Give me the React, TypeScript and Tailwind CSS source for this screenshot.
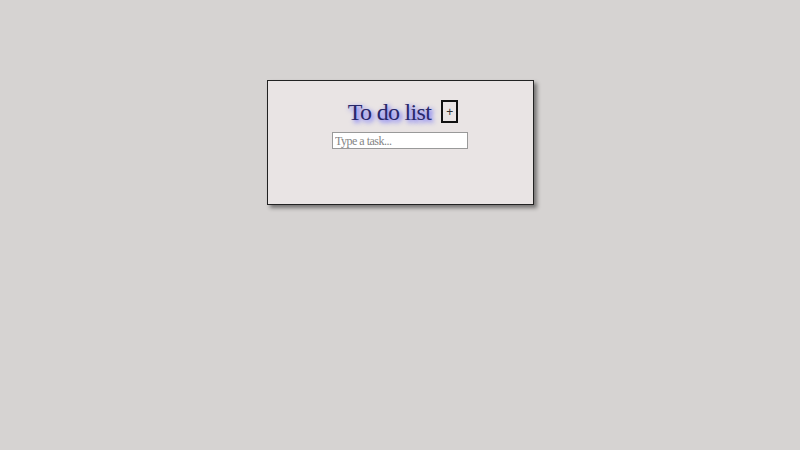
import React from "react";

export default function App() {
  return (
    <div className="min-h-screen w-full bg-[#d6d3d2] pt-[80px] font-['Liberation_Serif',serif]">
      <div className="mx-auto w-[267px] h-[125px] bg-[#e9e4e4] border border-[#222] shadow-[3px_3px_4px_rgba(0,0,0,0.45)] flex flex-col items-center pt-[19px]">
        <div className="flex items-center gap-[10px] h-[23px] pl-[6px]">
          <h1 className="text-[24px] tracking-[-0.7px] leading-none text-[#28286a] [text-shadow:2px_2px_5px_#4545ff]">
            To do list
          </h1>
          <button className="w-[17px] h-[23px] border-2 border-[#111] text-[12px] leading-none text-[#333] flex items-center justify-center font-['Liberation_Sans',sans-serif]">
            +
          </button>
        </div>
        <input
          type="text"
          placeholder="Type a task..."
          className="mt-[9px] w-[136px] h-[17px] bg-white border border-[#999] px-[2px] text-[12px] tracking-[-0.5px] placeholder:text-[#858585] outline-none"
        />
      </div>
    </div>
  );
}
